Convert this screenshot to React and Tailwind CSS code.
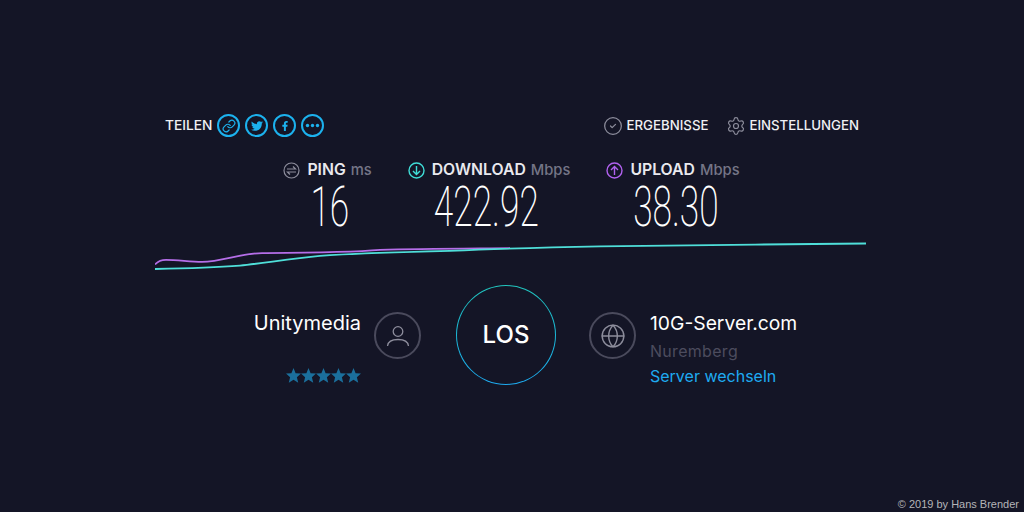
import React from 'react';
import { Link as LinkIcon, CircleCheck, Settings, Globe } from 'lucide-react';
import { FaTwitter, FaFacebookF } from 'react-icons/fa';

const sans = { fontFamily: 'Inter, sans-serif' };

const ShareButton = ({ children }) => (
  <div className="w-[23px] h-[23px] rounded-full border-2 border-[#1cb2ee] text-[#1cb2ee] flex items-center justify-center">
    {children}
  </div>
);

const Stat = ({ icon, label, unit, value, shift }) => (
  <div className="flex flex-col items-center">
    <div className="flex items-center h-[20px]">
      {icon}
      <span className="ml-[7px] text-[15.75px] font-semibold text-[#e9e9ee] leading-none">{label}</span>
      <span className="ml-[5px] text-[14.75px] font-medium text-[#757587] leading-none">{unit}</span>
    </div>
    <div
      className={`-mx-[40px] mt-[2px] h-[50px] text-[56px] leading-[50px] font-extralight text-white scale-x-[0.63] ${shift}`}
      style={{ fontFamily: 'Roboto, sans-serif' }}
    >
      {value}
    </div>
  </div>
);

const Star = () => (
  <svg width="15" height="15" viewBox="0 0 15 15" fill="#1b6f9c">
    <path d="M7.5 0l2.1 5.2 5.4.4-4.1 3.6 1.3 5.5-4.7-3-4.7 3 1.3-5.5L0 5.6l5.4-.4z" />
  </svg>
);

const App = () => {
  return (
    <div className="relative w-[1024px] h-[512px] overflow-hidden bg-[#141526]" style={sans}>
      <div className="w-[711px] ml-[155px] pt-[114px]">
        {/* Kopfzeile */}
        <div className="flex items-center justify-between h-[23px] pl-[10px] pr-[7px]">
          <div className="flex items-center gap-[5px]">
            <span className="text-[13.75px] font-medium text-[#f0f0f3]">TEILEN</span>
            <ShareButton><LinkIcon size={14} strokeWidth={2} /></ShareButton>
            <ShareButton><FaTwitter size={12} /></ShareButton>
            <ShareButton><FaFacebookF size={10} /></ShareButton>
            <ShareButton>
              <svg width="15" height="5" viewBox="0 0 15 5" fill="currentColor">
                <circle cx="2.5" cy="2.5" r="1.7" />
                <circle cx="7.5" cy="2.5" r="1.7" />
                <circle cx="12.5" cy="2.5" r="1.7" />
              </svg>
            </ShareButton>
          </div>
          <div className="flex items-center">
            <CircleCheck size={20} strokeWidth={1.5} className="text-[#8d8d9c]" />
            <span className="ml-[4px] text-[13.25px] font-medium text-[#f0f0f3]">ERGEBNISSE</span>
            <Settings size={20} strokeWidth={1.4} className="ml-[18px] text-[#8d8d9c]" />
            <span className="ml-[3px] text-[13.25px] font-medium text-[#f0f0f3]">EINSTELLUNGEN</span>
          </div>
        </div>

        {/* Messwerte */}
        <div className="flex justify-center gap-[36px] mt-[23px] pl-[2px]">
          <Stat
            label="PING"
            unit="ms"
            value="16"
            shift="translate-x-[2px]"
            icon={
              <svg width="17" height="17" viewBox="0 0 17 17" fill="none" stroke="#8d8d9c" strokeWidth="1.2">
                <circle cx="8.5" cy="8.5" r="7.5" />
                <path d="M4 7h8.5L10 4.5M13 10H4.5L7 12.5" />
              </svg>
            }
          />
          <Stat
            label="DOWNLOAD"
            unit="Mbps"
            value="422.92"
            shift="-translate-x-[3px]"
            icon={
              <svg width="17" height="17" viewBox="0 0 17 17" fill="none" stroke="#3fdcd6" strokeWidth="1.4">
                <circle cx="8.5" cy="8.5" r="7.5" />
                <path d="M8.5 4v8.5M5 9l3.5 3.5L12 9" />
              </svg>
            }
          />
          <Stat
            label="UPLOAD"
            unit="Mbps"
            value="38.30"
            shift="translate-x-[3px]"
            icon={
              <svg width="17" height="17" viewBox="0 0 17 17" fill="none" stroke="#b061ee" strokeWidth="1.4">
                <circle cx="8.5" cy="8.5" r="7.5" />
                <path d="M8.5 13V4.5M5 8l3.5-3.5L12 8" />
              </svg>
            }
          />
        </div>

        {/* Verlauf */}
        <svg width="711" height="40" viewBox="155 235 711 40" fill="none" className="block mt-[3px]">
          <path
            d="M155 264.5C158 261 162 259.8 166 259.8C178 259.8 190 261.8 202 261.8C222 261.8 240 253.3 262 253.1C300 252.8 350 252.5 380 249.8C420 248.8 460 248.6 510 248.1"
            stroke="#b56ee8"
            strokeWidth="1.8"
          />
          <path
            d="M155 269C180 268.5 215 267.5 240 265.6C262 263.5 290 258.5 320 255.8C350 253.5 420 251.5 450 250.8C480 249.5 540 247.5 600 246.3C680 245 780 244.5 866 243.5"
            stroke="#4fdfd9"
            strokeWidth="1.8"
          />
        </svg>

        {/* ISP, Start, Server */}
        <div className="flex items-start mt-[10px]">
          <div className="w-[206px] flex flex-col items-end pt-[26px]">
            <span className="text-[20px] leading-[24px] font-normal text-white">Unitymedia</span>
            <div className="flex mt-[33px] text-[#1b6f9c]">
              {[0, 1, 2, 3, 4].map((i) => (
                <Star key={i} />
              ))}
            </div>
          </div>
          <div className="mt-[27px] ml-[13px] w-[47px] h-[47px] rounded-full border-2 border-[#4a4a5c] flex items-center justify-center">
            <svg width="24" height="24" viewBox="0 0 24 24" fill="none" stroke="#8d8d9c" strokeWidth="1.3">
              <circle cx="12" cy="7.5" r="4.8" />
              <path d="M1.5 22C2 17.5 6 15.5 12 15.5S22 17.5 22.5 22" />
            </svg>
          </div>
          <div className="ml-[35px] w-[100px] h-[100px] rounded-full p-[1px] bg-linear-to-b from-[#22c7bf] to-[#1ea9ef]">
            <div className="w-full h-full rounded-full bg-[#141526] flex items-center justify-center text-[24px] font-medium text-white">
              LOS
            </div>
          </div>
          <div className="mt-[27px] ml-[33px] w-[47px] h-[47px] rounded-full border-2 border-[#4a4a5c] flex items-center justify-center">
            <Globe size={26} strokeWidth={1.3} className="text-[#8d8d9c]" />
          </div>
          <div className="ml-[14px] flex flex-col pt-[26px]">
            <span className="text-[19.3px] leading-[24px] text-white">10G-Server.com</span>
            <span className="mt-[4px] text-[16px] tracking-[0.3px] leading-[24px] text-[#4c4c5e]">Nuremberg</span>
            <span className="mt-[1px] text-[16px] leading-[24px] text-[#1eaaf1]">Server wechseln</span>
          </div>
        </div>
      </div>

      <div
        className="absolute right-[5px] bottom-[1px] text-[11px] leading-[14px] text-[#b4b4b8]"
        style={{ fontFamily: '"Liberation Sans", sans-serif' }}
      >
        © 2019 by Hans Brender
      </div>
    </div>
  );
};

export default App;
